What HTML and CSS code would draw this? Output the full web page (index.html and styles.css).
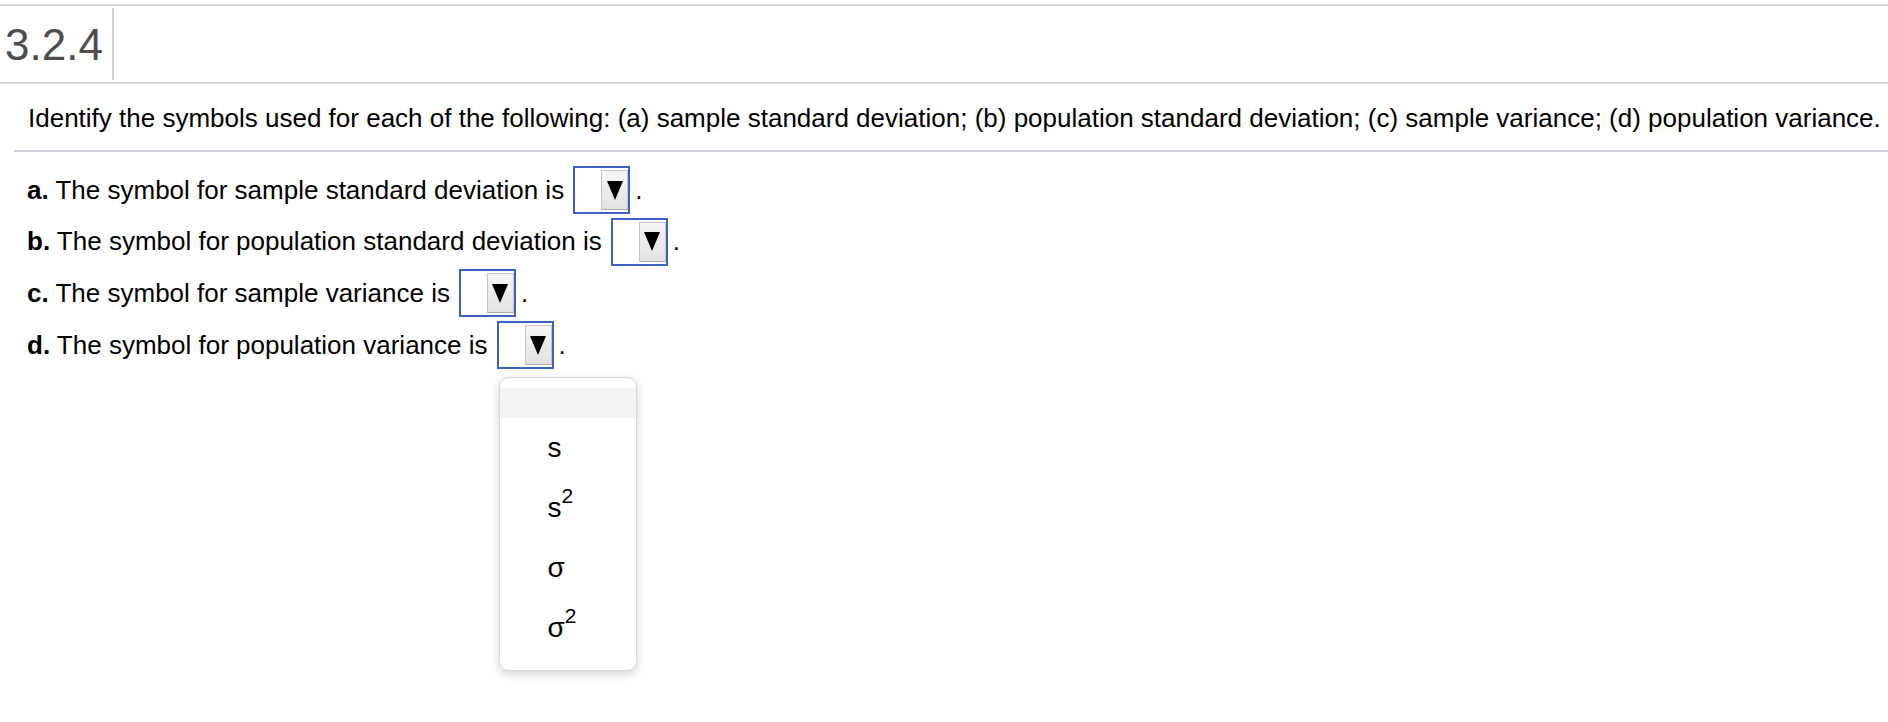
FILE: index.html
```html
<!DOCTYPE html>
<html>
<head>
<meta charset="utf-8">
<link rel="stylesheet" href="styles.css">
</head>
<body>
<div class="page">
  <header class="head">
    <div class="num">3.2.4</div>
  </header>
  <div class="question">Identify the symbols used for each of the following: (a) sample standard deviation; (b) population standard deviation; (c) sample variance; (d) population variance.</div>
  <div class="answers">
    <div class="row"><span class="lbl"><b>a.</b> The symbol for sample standard deviation is</span><span class="sel"><span class="btn"><svg viewBox="0 0 16 19" width="16" height="19"><polygon points="0,0 16,0 8,19" fill="#000"/></svg></span></span><span class="dot">.</span></div>
    <div class="row"><span class="lbl"><b>b.</b> The symbol for population standard deviation is</span><span class="sel"><span class="btn"><svg viewBox="0 0 16 19" width="16" height="19"><polygon points="0,0 16,0 8,19" fill="#000"/></svg></span></span><span class="dot">.</span></div>
    <div class="row"><span class="lbl"><b>c.</b> The symbol for sample variance is</span><span class="sel"><span class="btn"><svg viewBox="0 0 16 19" width="16" height="19"><polygon points="0,0 16,0 8,19" fill="#000"/></svg></span></span><span class="dot">.</span></div>
    <div class="row"><span class="lbl"><b>d.</b> The symbol for population variance is</span><span class="sel open"><span class="btn"><svg viewBox="0 0 16 19" width="16" height="19"><polygon points="0,0 16,0 8,19" fill="#000"/></svg></span>
      <div class="menu">
        <div class="opt blank"></div>
        <div class="opt">s</div>
        <div class="opt">s<sup>2</sup></div>
        <div class="opt">σ</div>
        <div class="opt">σ<sup>2</sup></div>
      </div>
    </span><span class="dot">.</span></div>
  </div>
</div>
</body>
</html>
```

FILE: styles.css
```css
html, body {
  margin: 0;
  padding: 0;
  background: #fff;
}
body {
  font-family: "Liberation Sans", Arial, sans-serif;
  color: #000;
  min-height: 722px;
}
.page {
  padding-top: 4px;
}
.head {
  border-top: 2px solid #cfd2dc;
  border-bottom: 2px solid #cfd2dc;
  height: 76px;
  display: flex;
  align-items: stretch;
}
.num {
  margin: 2px 0 2px 0;
  width: 114px;
  border-right: 2px solid #cfd2dc;
  font-size: 44px;
  color: #4d4d4d;
  display: flex;
  align-items: center;
  padding-left: 5px;
  box-sizing: border-box;
  padding-top: 2px;
}
.question {
  margin-left: 14px;
  padding: 19px 0 0 14px;
  height: 47px;
  border-bottom: 2px solid #cfd2dc;
  font-size: 26px;
  box-sizing: content-box;
}
.answers {
  padding: 14px 0 0 27px;
  display: flex;
  flex-direction: column;
  gap: 3.7px;
}
.row {
  display: flex;
  align-items: center;
  font-size: 26px;
  height: 48px;
}
.lbl {
  margin-right: 9px;
}
.sel {
  position: relative;
  box-sizing: border-box;
  width: 57px;
  height: 48px;
  border: 2px solid #3d62c6;
  display: flex;
  justify-content: flex-end;
  align-items: center;
}
.btn {
  box-sizing: border-box;
  width: 27px;
  height: 40px;
  border: 1px solid #c4c4c4;
  border-bottom-color: #a9a9a9;
  background: linear-gradient(#f6f6f6, #e2e2e2);
  display: flex;
  align-items: center;
  justify-content: center;
}
.dot {
  margin-left: 5px;
}
.menu {
  position: absolute;
  left: 0;
  top: 54px;
  width: 138px;
  height: 294px;
  box-sizing: border-box;
  border: 1px solid #d9d9d9;
  border-radius: 10px;
  background: #fff;
  box-shadow: 0 3px 10px rgba(0, 0, 0, 0.18);
  padding-top: 10px;
  z-index: 5;
}
.opt {
  font-size: 28px;
  height: 60px;
  line-height: 60px;
  padding-left: 48px;
}
.opt.blank {
  height: 30px;
  background: #f3f3f3;
}
.opt sup {
  font-size: 21px;
  vertical-align: 14px;
  line-height: 0;
}
```
